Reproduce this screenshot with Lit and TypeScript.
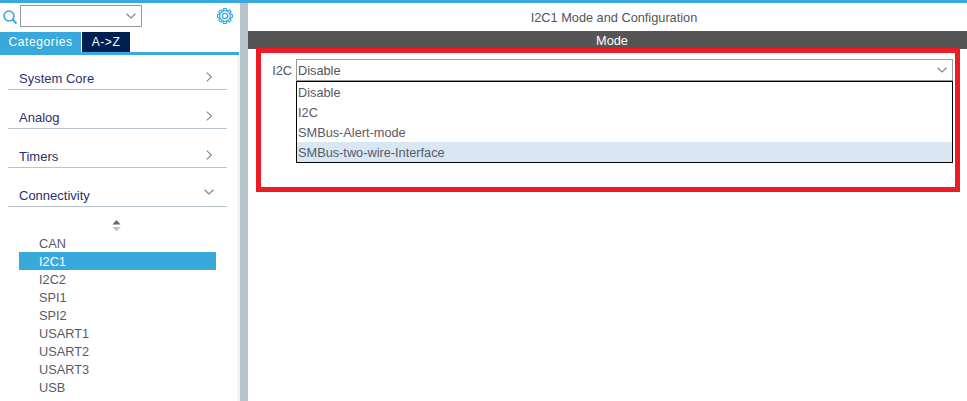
import { LitElement, html, css, svg } from "lit";
import { customElement } from "lit/decorators.js";

const chevRight = svg`<path d="M0.7 0.7 L5.4 5 L0.7 9.3" fill="none" stroke="#7f868c" stroke-width="1.1"/>`;
const chevDown = svg`<path d="M0.5 0.7 L5 5 L9.5 0.7" fill="none" stroke="#7f868c" stroke-width="1.2"/>`;

@customElement("app-root")
export class AppRoot extends LitElement {
  static styles = css`
    :host { display: block; width: 967px; height: 401px; overflow: hidden; background: #fff;
      font-family: "Liberation Sans", Arial, sans-serif; font-size: 12.75px; color: #555; }
    .topline { height: 3px; background: #39a9dc; }
    .main { display: flex; height: 398px; }
    .side { width: 237px; flex: none; display: flex; flex-direction: column; }
    .strip { width: 3px; flex: none; background: #f3f3f3; margin-top: 52px; }
    .split { width: 8px; flex: none; background: #b8c4cb; }
    .search { display: flex; align-items: flex-start; height: 27px; padding-top: 2px; }
    .lens { margin: 5px 0 0 3px; flex: none; }
    .combo { width: 122px; height: 22px; box-sizing: border-box; border: 1px solid #999; margin-left: 3px;
      display: flex; align-items: center; justify-content: flex-end; padding: 0 5px 0 0; }
    .gear { margin: 3px 4px 0 auto; }
    .tabs { display: flex; height: 20px; gap: 1px; }
    .tab { display: flex; align-items: center; justify-content: center; color: #fff; font-size: 12px; letter-spacing: 0.6px; }
    .tab.cat { width: 81px; background: #39a9dc; }
    .tab.az { width: 48px; background: #002052; }
    .tabline { height: 3px; width: 239px; background: #39a9dc; }
    .acc { padding: 0 0 0 8px; }
    .row { width: 219px; height: 39px; border-bottom: 1px solid #b8c4cb; display: flex; align-items: flex-end;
      justify-content: space-between; padding: 0 0 0 11px; box-sizing: border-box; color: #2b2f6e; font-size: 13px; }
    .row.first { height: 35px; }
    .row span { padding-bottom: 3px; }
    .row svg { margin: 0 15px 7px 0; }
    .row svg.dn { margin: 0 13px 11px 0; }
    .sort { display: flex; justify-content: center; width: 232px; height: 13px; margin-top: 13px; }
    .list { display: flex; flex-direction: column; padding-left: 19px; margin-top: 1px; }
    .item { width: 197px; height: 18px; line-height: 20px; box-sizing: border-box; padding-left: 20px; color: #5a5a66; }
    .item.sel { background: #39a9dc; color: #fff; }
    .content { flex: 1; min-width: 0; }
    .title { height: 28px; line-height: 29px; padding-left: 13px; text-align: center; color: #555; }
    .modehead { height: 18px; line-height: 20px; padding-left: 9px; background: #545554; color: #fff; text-align: center; }
    .red { position: relative; margin: -1px 0 0 8px; width: 704px; height: 144px; box-sizing: border-box; border: 5px solid #ed1c24;
      padding: 6px 2px 0 0; display: flex; align-items: flex-start; }
    .lab { width: 35px; height: 22px; line-height: 24px; text-align: right; padding-right: 4px; box-sizing: border-box; flex: none; color: #555; }
    .fld { flex: 1; min-width: 0; width: 657px; }
    .sel-box { height: 22px; line-height: 22px; box-sizing: border-box; border: 1px solid #999; display: flex; align-items: center; justify-content: space-between; padding: 0 5px 0 1px; }
    .sel-box span { padding-top: 1px; }
    .drop { height: 82px; box-sizing: border-box; border: 1px solid #000; display: flex; flex-direction: column; }
    .opt { height: 20px; line-height: 22px; padding-left: 1px; color: #5a5a66; }
    .opt.hl { background: #d9e7f4; }
  `;

  render() {
    const cats = ["System Core", "Analog", "Timers"];
    const items = ["CAN", "I2C1", "I2C2", "SPI1", "SPI2", "USART1", "USART2", "USART3", "USB"];
    const opts = ["Disable", "I2C", "SMBus-Alert-mode", "SMBus-two-wire-Interface"];
    const teeth = [0, 45, 90, 135, 180, 225, 270, 315];
    return html`
      <div class="topline"></div>
      <div class="main">
        <div class="side">
          <div class="search">
            <svg class="lens" width="14" height="14" viewBox="0 0 14 14">
              <circle cx="6" cy="6" r="5" fill="none" stroke="#39a9dc" stroke-width="1.6"/>
              <path d="M9.5 9.5 L13.5 13.5" stroke="#39a9dc" stroke-width="2"/>
            </svg>
            <div class="combo"><svg width="10" height="6" viewBox="0 0 10 6">${chevDown}</svg></div>
            <svg class="gear" width="16" height="16" viewBox="0 0 18 18">
              ${teeth.map((a) => svg`<rect x="7.2" y="0.6" width="3.6" height="3.4" rx="0.8" fill="none" stroke="#39a9dc" stroke-width="1.3" transform="rotate(${a} 9 9)"/>`)}
              <circle cx="9" cy="9" r="6" fill="#fff" stroke="#39a9dc" stroke-width="1.3"/>
              <circle cx="9" cy="9" r="3" fill="none" stroke="#39a9dc" stroke-width="1.5"/>
            </svg>
          </div>
          <div class="tabs"><div class="tab cat">Categories</div><div class="tab az">A-&gt;Z</div></div>
          <div class="tabline"></div>
          <div class="acc">
            ${cats.map((c, i) => html`<div class="row ${i === 0 ? "first" : ""}"><span>${c}</span><svg width="6" height="10" viewBox="0 0 6 10">${chevRight}</svg></div>`)}
            <div class="row"><span>Connectivity</span><svg class="dn" width="10" height="6" viewBox="0 0 10 6">${chevDown}</svg></div>
          </div>
          <div class="sort">
            <svg width="9" height="12" viewBox="0 0 9 12"><path d="M4.5 0 L8.5 4.5 H0.5 Z" fill="#666"/><path d="M4.5 11.5 L8.5 7 H0.5 Z" fill="#c4c4c4"/></svg>
          </div>
          <div class="list">
            ${items.map((t) => html`<div class="item ${t === "I2C1" ? "sel" : ""}">${t}</div>`)}
          </div>
        </div>
        <div class="strip"></div>
        <div class="split"></div>
        <div class="content">
          <div class="title">I2C1 Mode and Configuration</div>
          <div class="modehead">Mode</div>
          <div class="red">
            <div class="lab">I2C</div>
            <div class="fld">
              <div class="sel-box"><span>Disable</span><svg width="10" height="6" viewBox="0 0 10 6">${chevDown}</svg></div>
              <div class="drop">
                ${opts.map((o, i) => html`<div class="opt ${i === 3 ? "hl" : ""}">${o}</div>`)}
              </div>
            </div>
          </div>
        </div>
      </div>
    `;
  }
}
